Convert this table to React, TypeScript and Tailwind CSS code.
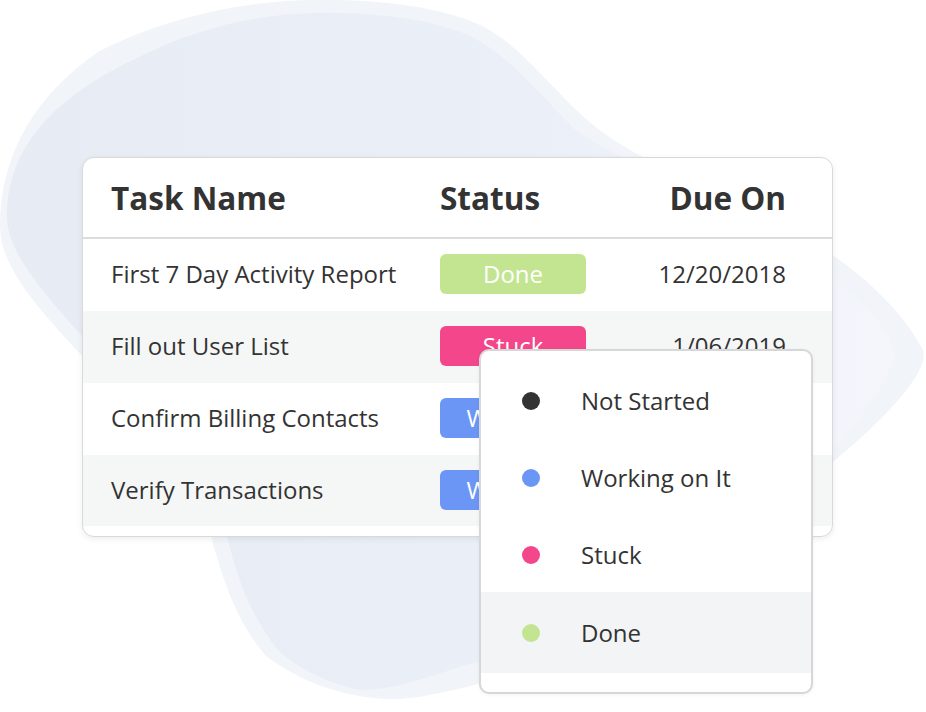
import { useState } from "react";

type Status = "Not Started" | "Working on It" | "Stuck" | "Done";

interface Task {
  name: string;
  status: Status;
  due: string;
}

const tasks: Task[] = [
  { name: "First 7 Day Activity Report", status: "Done", due: "12/20/2018" },
  { name: "Fill out User List", status: "Stuck", due: "1/06/2019" },
  { name: "Confirm Billing Contacts", status: "Working on It", due: "1/10/2019" },
  { name: "Verify Transactions", status: "Working on It", due: "1/14/2019" },
];

const pillClass: Record<Status, string> = {
  "Not Started": "bg-[#333333]",
  "Working on It": "bg-[#6b96f6]",
  Stuck: "bg-[#f4468b]",
  Done: "bg-[#c3e592]",
};

const pillLabel: Record<Status, string> = {
  "Not Started": "Not Started",
  "Working on It": "Working",
  Stuck: "Stuck",
  Done: "Done",
};

const dotClass: Record<Status, string> = {
  "Not Started": "bg-[#333333]",
  "Working on It": "bg-[#6b96f6]",
  Stuck: "bg-[#f4468b]",
  Done: "bg-[#c3e592]",
};

const options: { label: Status; h: string }[] = [
  { label: "Not Started", h: "h-[77px]" },
  { label: "Working on It", h: "h-[78px]" },
  { label: "Stuck", h: "h-[75px]" },
  { label: "Done", h: "h-[81px]" },
];

const rowHeights = ["h-[72px]", "h-[72px]", "h-[72px]", "h-[71px]"];

const Blob = () => (
  <svg
    className="absolute inset-0"
    width="926"
    height="712"
    viewBox="0 0 926 712"
    fill="none"
  >
    <defs>
      <linearGradient id="blobFill" x1="0" y1="0" x2="1" y2="0">
        <stop offset="0" stopColor="#e6ebf4" />
        <stop offset="0.6" stopColor="#ebeff8" />
        <stop offset="1" stopColor="#f4f6fc" />
      </linearGradient>
    </defs>
    <path
      fill="#f1f4f8"
      d="M317 0 C390 -1 450 10 482 26 C522 46 548 86 592 124 C640 164 720 190 782 224 C850 260 900 306 923 350 C930 372 884 420 833 462 C740 560 560 660 470 686 C430 696 405 700 387 699 C340 697 298 680 266 656 C244 630 228 600 211 536 C190 460 130 405 82 356 C40 310 0 268 0 226 C0 150 40 92 98 52 C168 16 250 0 317 0 Z"
    />
    <path
      fill="url(#blobFill)"
      d="M317 13 C380 12 430 20 463 33 C500 48 530 82 573 128 C600 150 640 162 700 200 C760 232 815 262 850 292 C878 318 898 342 893 360 C886 382 862 420 833 447 C720 560 560 640 463 666 C420 680 390 690 360 690 C322 682 292 664 277 649 C255 620 240 590 227 536 C200 450 120 392 82 336 C45 295 7 252 7 217 C7 150 50 100 133 60 C200 26 260 14 317 13 Z"
    />
  </svg>
);

export default function App() {
  const [selected, setSelected] = useState<Status>("Done");

  return (
    <div className="relative w-[926px] h-[712px] bg-white overflow-hidden font-['Open_Sans',sans-serif] text-[#333333]">
      <Blob />

      <div className="relative ml-[82px] pt-[157px] w-[751px]">
        <div className="bg-white border border-[#d9d9d9] rounded-[12px] overflow-hidden shadow-[0_2px_6px_rgba(0,0,0,0.07)] pb-[10px]">
          <div className="h-[81px] flex items-center pl-[28px] pr-[46px] border-b-2 border-[#dcdcdc] text-[31.5px] font-bold">
            <div className="w-[329px]">Task Name</div>
            <div className="w-[146px]">Status</div>
            <div className="flex-1 text-right">Due On</div>
          </div>

          {tasks.map((task, idx) => (
            <div
              key={task.name}
              className={`${rowHeights[idx]} flex items-center pl-[28px] pr-[46px] pb-[2px] text-[24px] ${
                idx % 2 === 1 ? "bg-[#f5f7f7]" : "bg-white"
              }`}
            >
              <div className="w-[329px] whitespace-nowrap">{task.name}</div>
              <div
                className={`w-[146px] h-[40px] rounded-[6px] flex items-center justify-center text-white whitespace-nowrap ${pillClass[task.status]}`}
              >
                {pillLabel[task.status]}
              </div>
              <div className="flex-1 text-right">{task.due}</div>
            </div>
          ))}
        </div>

        <div className="absolute left-[397px] top-[349px] w-[334px] bg-white border-2 border-[#d7d7d7] rounded-[10px] overflow-hidden pt-[11px] pb-[19px] shadow-[0_1px_4px_rgba(0,0,0,0.05)]">
          {options.map((opt) => (
            <button
              key={opt.label}
              onClick={() => setSelected(opt.label)}
              className={`w-full ${opt.h} flex items-center pl-[41px] text-[24px] text-left ${
                selected === opt.label ? "bg-[#f3f4f6]" : "bg-white"
              }`}
            >
              <span className={`w-[18px] h-[18px] rounded-full ${dotClass[opt.label]}`} />
              <span className="ml-[41px]">{opt.label}</span>
            </button>
          ))}
        </div>
      </div>
    </div>
  );
}
